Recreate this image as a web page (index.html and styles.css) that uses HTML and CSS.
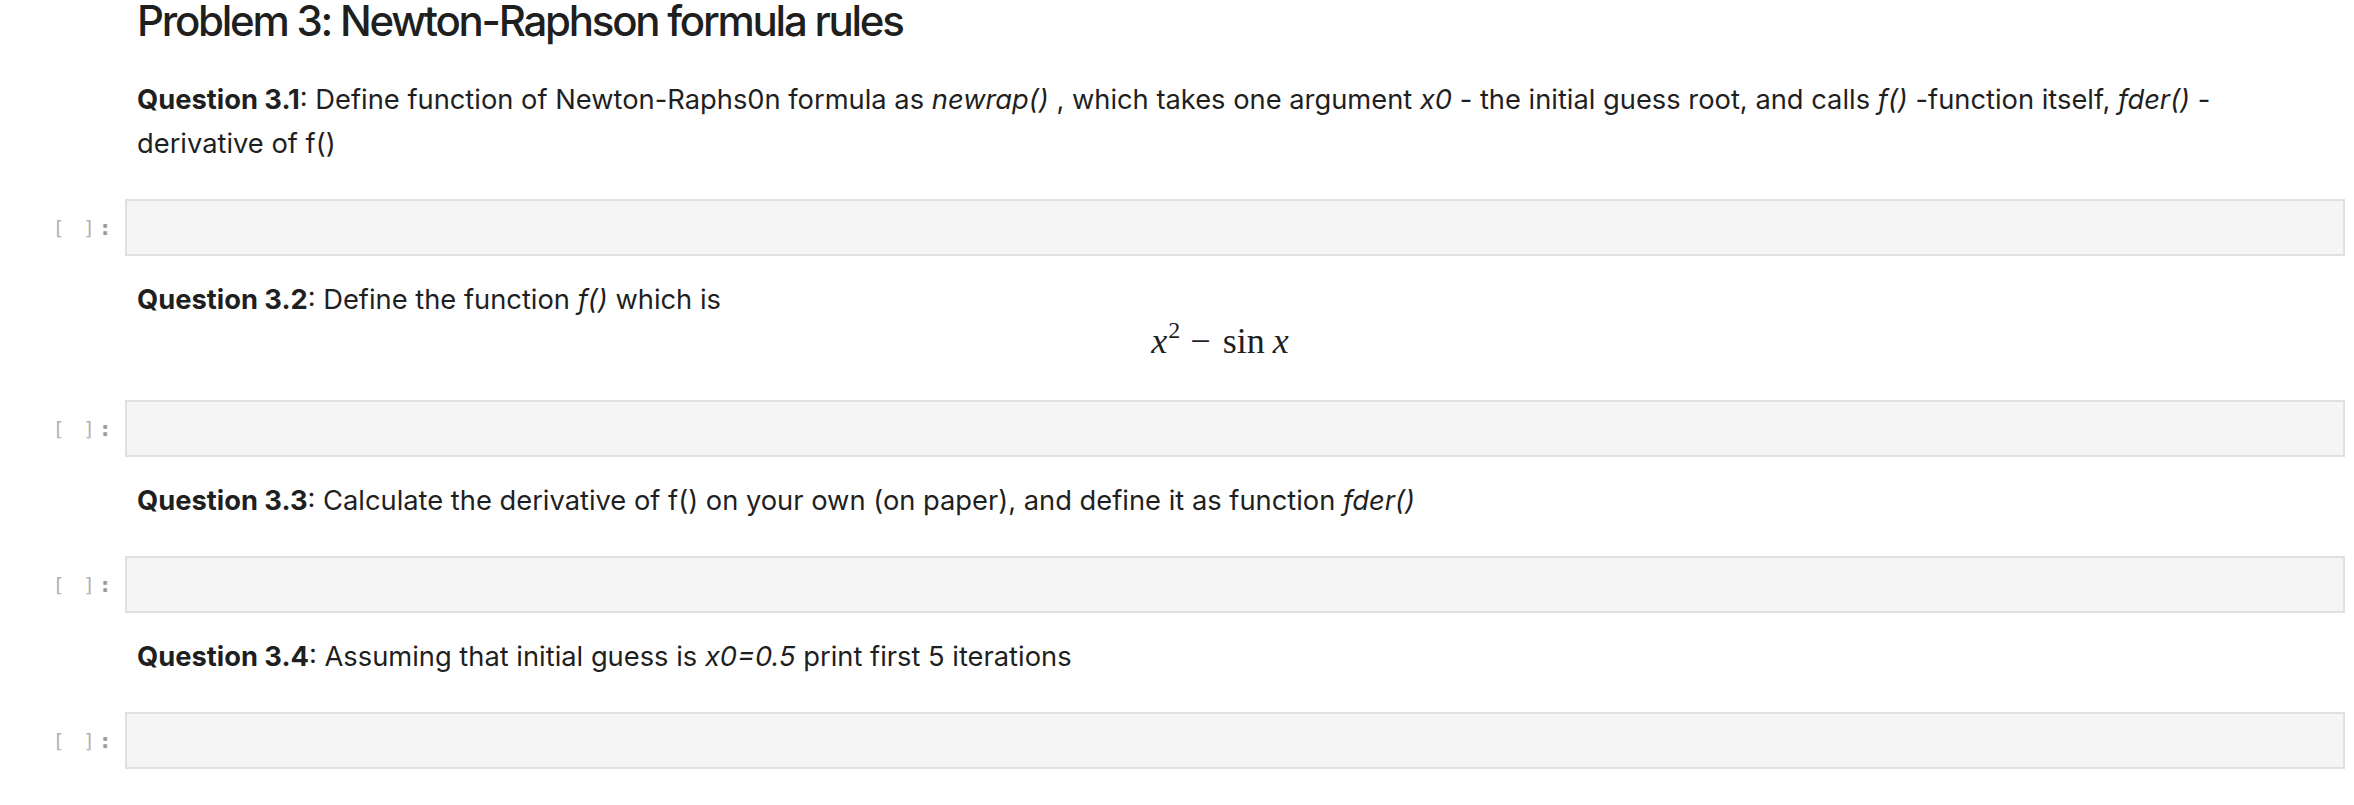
FILE: index.html
```html
<!DOCTYPE html>
<html lang="en">
<head>
<meta charset="utf-8">
<title>Problem 3: Newton-Raphson formula rules</title>
<link rel="stylesheet" href="styles.css">
</head>
<body>
<div class="notebook">
  <div class="cell md title-cell">
    <div class="prompt"></div>
    <div class="md-body">
      <h1 class="title">Problem 3: Newton-Raphson formula rules</h1>
    </div>
  </div>

  <div class="cell md first-q">
    <div class="prompt"></div>
    <div class="md-body">
      <p><b>Question 3.1</b>: Define function of Newton-Raphs0n formula as <i>newrap()</i> , which takes one argument <i>x0</i> - the initial guess root, and calls <i>f()</i> -function itself, <i>fder()</i> - derivative of f()</p>
    </div>
  </div>

  <div class="cell code">
    <div class="prompt code-prompt">[&nbsp;]<span class="colon">:</span></div>
    <div class="input-area"></div>
  </div>

  <div class="cell md">
    <div class="prompt"></div>
    <div class="md-body">
      <p><b>Question 3.2</b>: Define the function <i>f()</i> which is</p>
      <div class="math"><span class="mi">x</span><sup class="msup">2</sup><span class="mo">&minus;</span><span class="mfn">sin</span><span class="mi mi-arg">x</span></div>
    </div>
  </div>

  <div class="cell code">
    <div class="prompt code-prompt">[&nbsp;]<span class="colon">:</span></div>
    <div class="input-area"></div>
  </div>

  <div class="cell md">
    <div class="prompt"></div>
    <div class="md-body">
      <p><b>Question 3.3</b>: Calculate the derivative of f() on your own (on paper), and define it as function <i>fder()</i></p>
    </div>
  </div>

  <div class="cell code">
    <div class="prompt code-prompt">[&nbsp;]<span class="colon">:</span></div>
    <div class="input-area"></div>
  </div>

  <div class="cell md">
    <div class="prompt"></div>
    <div class="md-body">
      <p><b>Question 3.4</b>: Assuming that initial guess is <i>x0=0.5</i> print first 5 iterations</p>
    </div>
  </div>

  <div class="cell code">
    <div class="prompt code-prompt">[&nbsp;]<span class="colon">:</span></div>
    <div class="input-area"></div>
  </div>
</div>
</body>
</html>
```

FILE: styles.css
```css
html, body {
  margin: 0;
  padding: 0;
  background: #ffffff;
}

body {
  font-family: Inter, "Noto Sans", "Liberation Sans", sans-serif;
  color: #1f1f1f;
}

.notebook {
  display: flex;
  flex-direction: column;
  padding: 0 9px 0 0;
}

.cell {
  display: flex;
  flex-direction: row;
}

.prompt {
  flex: 0 0 125px;
  width: 125px;
  box-sizing: border-box;
}

.md-body {
  flex: 1 1 auto;
  padding: 0 42px 0 12px;
  min-width: 0;
}

.md {
  padding: 22px 0 33px;
}

.title-cell {
  padding: 0;
}

.title {
  margin: 0;
  font-size: 42px;
  line-height: 42px;
  font-weight: 500;
  letter-spacing: -2.25px;
  color: #1f1f1f;
}

.first-q {
  padding-top: 36px;
}

.md p {
  margin: 0;
  font-size: 27.3px;
  line-height: 44px;
}

.md p b {
  font-weight: 700;
}

.math {
  margin: -3px 0 4px;
  text-align: center;
  font-family: "Liberation Serif", "DejaVu Serif", serif;
  font-size: 36px;
  line-height: 44px;
  color: #1f1f1f;
}

.mi {
  font-style: italic;
}

.msup {
  font-size: 24px;
  vertical-align: 0;
  position: relative;
  top: -15px;
  line-height: 0;
  margin-left: 1px;
}

.mo {
  margin: 0 12px 0 10px;
}

.mi-arg {
  margin-left: 8px;
}

.code {
  align-items: center;
}

.code-prompt {
  text-align: right;
  padding-right: 10px;
  font-family: "DejaVu Sans Mono", "Liberation Mono", monospace;
  font-size: 20px;
  letter-spacing: 3.3px;
  color: #b3b3b3;
}

.colon {
  font-size: 22px;
  color: #9a9a9a;
  font-weight: 700;
}

.input-area {
  flex: 1 1 auto;
  height: 57px;
  box-sizing: border-box;
  background: #f5f5f5;
  border: 2px solid #e0e0e0;
}
```
